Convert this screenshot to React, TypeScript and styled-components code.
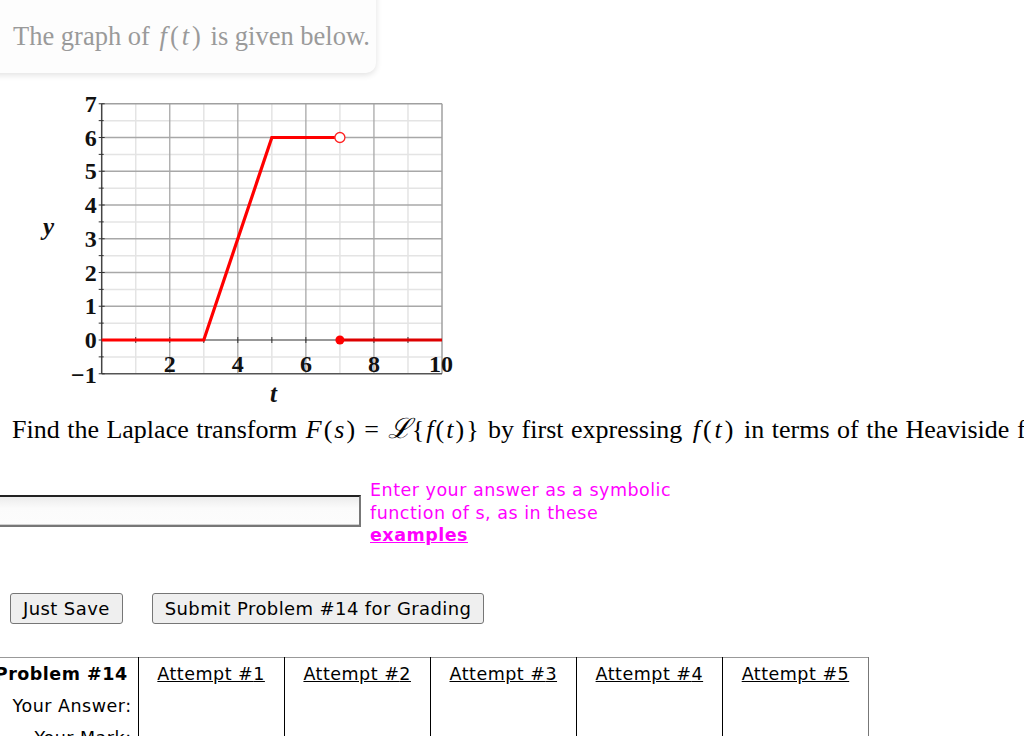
import React from "react";
import styled, { createGlobalStyle } from "styled-components";

const Global = createGlobalStyle`
  html, body { margin: 0; padding: 0; background: #fff; overflow: hidden; }
  body { width: 1024px; height: 736px; font-family: "DejaVu Sans", Verdana, sans-serif; }
`;

const Page = styled.div`
  width: 1024px;
  height: 736px;
  overflow: hidden;
  position: relative;
`;

const Card = styled.div`
  margin-left: -20px;
  margin-top: -10px;
  width: 396px;
  height: 83px;
  box-sizing: border-box;
  background: #fdfdfd;
  border-radius: 0 0 10px 0;
  box-shadow: 0 2px 6px rgba(0, 0, 0, 0.12);
  padding: 31px 0 0 33px;
  font-family: "Liberation Serif", "Times New Roman", serif;
  font-size: 26.5px;
  color: #9a9a9a;
  white-space: nowrap;
`;

const MathVar = styled.span<{ $gap?: number; $left?: number }>`
  font-style: italic;
  letter-spacing: ${(p) => p.$gap ?? 2}px;
  margin-left: ${(p) => p.$left ?? 0}px;
`;

const Up = styled.span`
  font-style: normal;
`;

const ChartWrap = styled.div`
  margin: 15px 0 0 30px;
  width: 430px;
  height: 322px;
`;

const Question = styled.p`
  margin: 0;
  padding: 5px 0 0 12px;
  font-family: "Liberation Serif", "Times New Roman", serif;
  font-size: 26px;
  word-spacing: 1px;
  color: #000;
  white-space: nowrap;
`;

const Eq = styled.span`
  padding: 0 9px 0 7px;
`;

const Script = styled.span`
  font-family: "DejaVu Serif", serif;
  font-style: italic;
  font-size: 28px;
  line-height: 1;
  margin-right: 1px;
`;

const AnswerRow = styled.div`
  display: flex;
  align-items: flex-start;
  margin-top: 34px;
  margin-left: -10px;
`;

const AnswerInput = styled.div`
  width: 371px;
  height: 32px;
  box-sizing: border-box;
  margin-top: 16px;
  border-style: solid;
  border-width: 2px;
  border-color: #222 #777 #777 #222;
  background: linear-gradient(#ececec, #fbfbfb 40%, #fcfcfc);
  box-shadow: inset 0 -1px 0 #cfcfcf;
`;

const Hint = styled.div`
  margin-left: 9px;
  font-size: 17.5px;
  letter-spacing: 0.5px;
  line-height: 22.5px;
  color: #ff00ff;
`;

const HintLink = styled.a`
  font-weight: bold;
  color: #ff00ff;
  text-decoration: underline;
`;

const ButtonRow = styled.div`
  display: flex;
  gap: 29px;
  margin: 46px 0 0 10px;
`;

const Button = styled.button`
  height: 31px;
  padding: 0 12px;
  font-family: "DejaVu Sans", Verdana, sans-serif;
  font-size: 18px;
  letter-spacing: 0.4px;
  color: #000;
  background: #efefef;
  border: 1px solid #767676;
  border-radius: 3px;
`;

const Table = styled.table`
  margin: 33px 0 0 -20px;
  border-collapse: collapse;
  table-layout: fixed;
  width: 889px;
  border-top: 1px solid #999;
  font-size: 17.5px;
  letter-spacing: 0.5px;
`;

const FirstCol = styled.col`
  width: 158px;
`;

const AttemptCol = styled.col`
  width: 146px;
`;

const HeadCell = styled.td<{ $bold?: boolean }>`
  padding: 0 ${(p) => (p.$bold ? 10 : 6)}px 0 0;
  height: 32px;
  text-align: right;
  font-weight: ${(p) => (p.$bold ? "bold" : "normal")};
  border-right: 1px solid #000;
  white-space: nowrap;
`;

const Cell = styled.td`
  padding: 0;
  text-align: center;
  vertical-align: middle;
  border-left: 1px solid #000;
  border-right: 1px solid #000;
  white-space: nowrap;
`;

const LastCell = styled(Cell)`
  border-right: 1px solid #777;
`;

const AttemptLink = styled.a`
  color: #000;
  text-decoration: underline;
`;

const OX = 30;
const OY = 88;
const X = (t: number) => 101.7 + 34.03 * t - OX;
const Y = (y: number) => 340 - 33.75 * y - OY;

const Chart: React.FC = () => {
  const minorX = [1, 3, 5, 7, 9];
  const majorX = [2, 4, 6, 8];
  const ys: number[] = [];
  for (let v = -1; v <= 7; v += 0.5) ys.push(v);
  const yLabels = [7, 6, 5, 4, 3, 2, 1, 0];
  return (
    <svg width={430} height={322} viewBox="0 0 430 322">
      {minorX.map((t) => (
        <line key={"mx" + t} x1={X(t)} x2={X(t)} y1={Y(7)} y2={Y(-1)} stroke="#e4e4e4" strokeWidth={1.5} />
      ))}
      {ys
        .filter((v) => v % 1 !== 0)
        .map((v) => (
          <line key={"my" + v} x1={X(0)} x2={X(10)} y1={Y(v)} y2={Y(v)} stroke="#e4e4e4" strokeWidth={1.5} />
        ))}
      {majorX.map((t) => (
        <line key={"Mx" + t} x1={X(t)} x2={X(t)} y1={Y(7)} y2={Y(-1)} stroke="#a8a8a8" strokeWidth={1.3} />
      ))}
      {[1, 2, 3, 4, 5, 6].map((v) => (
        <line key={"My" + v} x1={X(0)} x2={X(10)} y1={Y(v)} y2={Y(v)} stroke="#a8a8a8" strokeWidth={1.3} />
      ))}
      <line x1={X(0)} x2={X(10)} y1={Y(7)} y2={Y(7)} stroke="#a0a0a0" strokeWidth={1.5} />
      <line x1={X(10)} x2={X(10)} y1={Y(7)} y2={Y(-1)} stroke="#a0a0a0" strokeWidth={1.5} />
      <line x1={X(0)} x2={X(10)} y1={Y(-1)} y2={Y(-1)} stroke="#555" strokeWidth={1.5} />
      <line x1={X(0)} x2={X(10)} y1={Y(0)} y2={Y(0)} stroke="#333" strokeWidth={1.2} />
      <line x1={X(0)} x2={X(0)} y1={Y(7)} y2={Y(-1)} stroke="#444" strokeWidth={1.5} />
      {ys.map((v) => (
        <line key={"ty" + v} x1={X(0) - 3} x2={X(0) + (v % 1 === 0 ? 3 : 2)} y1={Y(v)} y2={Y(v)} stroke="#333" strokeWidth={1} />
      ))}
      {[1, 2, 3, 4, 5, 6, 7, 8, 9].map((t) => (
        <line key={"tx" + t} x1={X(t)} x2={X(t)} y1={Y(0) - 3} y2={Y(0) + 3} stroke="#333" strokeWidth={1} />
      ))}
      <g fontFamily='"Liberation Serif", "Times New Roman", serif' fontWeight="bold" fontSize={24} fill="#111">
        {yLabels.map((v) => (
          <text key={"yl" + v} x={X(0) - 5} y={Y(v) + 8} textAnchor="end">
            {v}
          </text>
        ))}
        <text x={X(0) - 5} y={Y(-1) + 9} textAnchor="end">
          −1
        </text>
        {[2, 4, 6, 8, 10].map((t) => (
          <text key={"xl" + t} x={X(t) - (t === 10 ? 1 : 0)} y={Y(0) + 32} textAnchor="middle">
            {t}
          </text>
        ))}
        <text x={13} y={147} fontStyle="italic" fontSize={25}>
          y
        </text>
        <text x={240} y={314} fontStyle="italic" fontSize={25}>
          t
        </text>
      </g>
      <polyline
        points={`${X(0)},${Y(0)} ${X(3)},${Y(0)} ${X(5)},${Y(6)} ${X(7) - 5},${Y(6)}`}
        fill="none"
        stroke="#ff0000"
        strokeWidth={3.2}
        strokeLinejoin="miter"
      />
      <circle cx={X(7)} cy={Y(6)} r={5} fill="#fff" stroke="#ff2020" strokeWidth={1.3} />
      <line x1={X(7)} x2={X(10)} y1={Y(0)} y2={Y(0)} stroke="#dd0000" strokeWidth={3.2} />
      <circle cx={X(7)} cy={Y(0)} r={4.5} fill="#ff0000" />
    </svg>
  );
};

export default function App() {
  return (
    <Page>
      <Global />
      <Card>
        The graph of{" "}
        <MathVar $gap={3} $left={3}>
          f<Up>(</Up>t<Up>)</Up>
        </MathVar>{" "}
        is given below.
      </Card>
      <ChartWrap>
        <Chart />
      </ChartWrap>
      <Question>
        Find the Laplace transform{" "}
        <MathVar $gap={2} $left={1}>
          F<Up>(</Up>s<Up>)</Up>
        </MathVar>
        <Eq>=</Eq>
        <Script>ℒ</Script>
        <MathVar $gap={2}>
          <Up>{"{"}</Up>f<Up>(</Up>t<Up>)</Up>
          <Up>{"}"}</Up>
        </MathVar>{" "}
        by first expressing{" "}
        <MathVar $gap={3} $left={3}>
          f<Up>(</Up>t<Up>)</Up>
        </MathVar>{" "}
        in terms of the Heaviside function.
      </Question>
      <AnswerRow>
        <AnswerInput />
        <Hint>
          Enter your answer as a symbolic
          <br />
          function of s, as in these
          <br />
          <HintLink href="#">examples</HintLink>
        </Hint>
      </AnswerRow>
      <ButtonRow>
        <Button>Just Save</Button>
        <Button>Submit Problem #14 for Grading</Button>
      </ButtonRow>
      <Table>
        <colgroup>
          <FirstCol />
          <AttemptCol />
          <AttemptCol />
          <AttemptCol />
          <AttemptCol />
          <AttemptCol />
        </colgroup>
        <tbody>
          <tr>
            <HeadCell $bold>Problem #14</HeadCell>
            {[1, 2, 3, 4].map((n) => (
              <Cell key={n}>
                <AttemptLink href="#">Attempt #{n}</AttemptLink>
              </Cell>
            ))}
            <LastCell>
              <AttemptLink href="#">Attempt #5</AttemptLink>
            </LastCell>
          </tr>
          <tr>
            <HeadCell>Your Answer:</HeadCell>
            <Cell />
            <Cell />
            <Cell />
            <Cell />
            <LastCell />
          </tr>
          <tr>
            <HeadCell>Your Mark:</HeadCell>
            <Cell />
            <Cell />
            <Cell />
            <Cell />
            <LastCell />
          </tr>
        </tbody>
      </Table>
    </Page>
  );
}
